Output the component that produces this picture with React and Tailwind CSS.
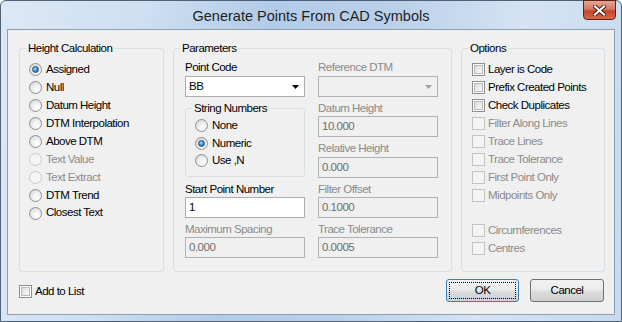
import React from "react";

function Group({ title, className, children }) {
  return (
    <fieldset className={`min-w-0 rounded-[3px] border border-[#d5dfe5] ${className}`}>
      <legend className="ml-[6px] px-[2px] leading-[13px]">{title}</legend>
      {children}
    </fieldset>
  );
}

function Radio({ label, checked, disabled, h = "h-[17.9px]" }) {
  return (
    <div className={`flex items-center gap-[4px] whitespace-nowrap ${h}`}>
      <span
        className={`flex h-[13px] w-[13px] shrink-0 items-center justify-center rounded-full border ${
          disabled
            ? "border-[#c9c9c9] bg-[#f5f5f5]"
            : "border-[#8e8f8f] bg-[radial-gradient(circle_at_65%_70%,#ffffff_0%,#eeeeee_45%,#cdcdcd_100%)]"
        }`}
      >
        {checked && (
          <span className="h-[7px] w-[7px] rounded-full border border-[#1d4f7c] bg-[radial-gradient(circle_at_40%_35%,#a6e4ff_0%,#3594d6_50%,#1a5588_100%)]" />
        )}
      </span>
      <span className={disabled ? "text-[#8b8b8b]" : "text-black"}>{label}</span>
    </div>
  );
}

function Check({ label, disabled, h = "h-[17.9px]" }) {
  return (
    <div className={`flex items-center gap-[3px] whitespace-nowrap ${h}`}>
      <span
        className={`h-[13px] w-[13px] shrink-0 border p-[1px] ${
          disabled ? "border-[#c4c4c4] bg-[#f4f4f4]" : "border-[#8e8f8f] bg-white"
        }`}
      >
        {!disabled && (
          <span className="block h-full w-full border border-[#b5b9bd] bg-[linear-gradient(135deg,#d8dadd_0%,#eceded_55%,#fbfbfb_100%)]" />
        )}
      </span>
      <span className={disabled ? "text-[#8b8b8b]" : "text-black"}>{label}</span>
    </div>
  );
}

function Label({ children, disabled, className = "" }) {
  return (
    <div className={`h-[13px] whitespace-nowrap leading-[13px] ${disabled ? "text-[#8b8b8b]" : "text-black"} ${className}`}>
      {children}
    </div>
  );
}

function Field({ value, disabled, className = "" }) {
  return (
    <div
      className={`flex h-[21px] items-center border pl-[3px] ${
        disabled ? "border-[#adb2b5] bg-[#f0f0f0] text-[#6d6d6d]" : "border-[#abadb3] bg-white text-black"
      } ${className}`}
    >
      {value}
    </div>
  );
}

function Combo({ value, disabled, className = "" }) {
  return (
    <div
      className={`flex h-[21px] items-center justify-between border pl-[3px] pr-[5px] ${
        disabled ? "border-[#adb2b5] bg-[#f0f0f0]" : "border-[#abadb3] bg-white"
      } ${className}`}
    >
      <span>{value}</span>
      <svg width="7" height="4" viewBox="0 0 7 4">
        <path d="M0 0h7L3.5 4z" fill={disabled ? "#a3a3a3" : "#000"} />
      </svg>
    </div>
  );
}

function Button({ children, primary }) {
  return (
    <button
      className={`h-[23px] rounded-[3px] border p-[2px] ${
        primary ? "w-[73px] border-[#3c7fb1]" : "w-[74px] border-[#707070]"
      } bg-[linear-gradient(#f2f2f2_0%,#ebebeb_48%,#dddddd_52%,#cfcfcf_100%)]`}
    >
      <span
        className={`flex h-full items-center justify-center border ${
          primary ? "border-dotted border-black" : "border-transparent"
        }`}
      >
        {children}
      </span>
    </button>
  );
}

export default function App() {
  return (
    <div className="flex h-[322px] w-[622px] flex-col rounded-t-[6px] border border-[#4f6176] bg-[linear-gradient(100deg,#dce8f5_0%,#cddff1_22%,#b2cbe8_40%,#b9d0ea_58%,#d5e3f3_78%,#c6d9ee_100%)] px-[6px] pb-[6px] font-['Liberation_Sans',Arial,sans-serif] text-[11.5px] tracking-[-0.5px] text-black">
      {/* Title bar */}
      <div className="-mx-[6px] grid h-[28px] grid-cols-[1fr_auto_1fr]">
        <div />
        <div className="pt-[5px] text-[14.5px] leading-[20px] tracking-normal text-[#1e1e1e]">
          Generate Points From CAD Symbols
        </div>
        <div className="flex justify-end">
          <div className="-mt-[1px] mr-[5px] flex h-[20px] w-[33px] items-center justify-center rounded-b-[4px] border border-[#5e2418] bg-[linear-gradient(#e8a493_0%,#d47a62_45%,#c4472b_55%,#d3684a_100%)]">
            <svg width="13" height="11" viewBox="0 0 13 11">
              <path d="M2 1.5l9 8M11 1.5l-9 8" stroke="#3b1a14" strokeWidth="4" strokeLinecap="square" />
              <path d="M2 1.5l9 8M11 1.5l-9 8" stroke="#ffffff" strokeWidth="2.2" strokeLinecap="square" />
            </svg>
          </div>
        </div>
      </div>

      {/* Client area */}
      <div className="flex flex-1 flex-col border border-[#8d9db2] bg-[#f0f0f0] pl-[11px] pr-[9px] pt-[12px]">
        <div className="flex gap-[9px]">
          <Group title="Height Calculation" className="h-[230px] w-[145px]">
            <div className="pl-[9px] pt-[6px]">
              <Radio label="Assigned" checked />
              <Radio label="Null" />
              <Radio label="Datum Height" />
              <Radio label="DTM Interpolation" />
              <Radio label="Above DTM" />
              <Radio label="Text Value" disabled />
              <Radio label="Text Extract" disabled />
              <Radio label="DTM Trend" />
              <Radio label="Closest Text" />
            </div>
          </Group>

          <Group title="Parameters" className="h-[230px] w-[279px]">
            <div className="flex gap-[13px] pl-[11px] pt-[6px]">
              <div className="flex w-[120px] flex-col">
                <Label>Point Code</Label>
                <Combo value="BB" className="mt-[2px]" />
                <Group title="String Numbers" className="mt-[5px] h-[75px] w-[120px]">
                  <div className="pl-[9px] pt-[2px]">
                    <Radio label="None" h="h-[17.5px]" />
                    <Radio label="Numeric" checked h="h-[17.5px]" />
                    <Radio label="Use ,N" h="h-[17.5px]" />
                  </div>
                </Group>
                <Label className="mt-[6px]">Start Point Number</Label>
                <Field value="1" className="mt-[1px]" />
                <Label disabled className="mt-[5px]">Maximum Spacing</Label>
                <Field value="0.000" disabled className="mt-[1px]" />
              </div>
              <div className="flex w-[120px] flex-col">
                <Label disabled>Reference DTM</Label>
                <Combo disabled className="mt-[2px]" />
                <Label disabled className="mt-[5px]">Datum Height</Label>
                <Field value="10.000" disabled className="mt-[1px]" />
                <Label disabled className="mt-[5px]">Relative Height</Label>
                <Field value="0.000" disabled className="mt-[2px]" />
                <Label disabled className="mt-[5px]">Filter Offset</Label>
                <Field value="0.1000" disabled className="mt-[1px]" />
                <Label disabled className="mt-[5px]">Trace Tolerance</Label>
                <Field value="0.0005" disabled className="mt-[1px]" />
              </div>
            </div>
          </Group>

          <Group title="Options" className="h-[230px] w-[144px]">
            <div className="pl-[10px] pt-[6px]">
              <Check label="Layer is Code" />
              <Check label="Prefix Created Points" />
              <Check label="Check Duplicates" />
              <Check label="Filter Along Lines" disabled />
              <Check label="Trace Lines" disabled />
              <Check label="Trace Tolerance" disabled />
              <Check label="First Point Only" disabled />
              <Check label="Midpoints Only" disabled />
              <div className="h-[17.9px]" />
              <Check label="Circumferences" disabled />
              <Check label="Centres" disabled />
            </div>
          </Group>
        </div>

        <div className="mt-[7px] flex items-center justify-between">
          <div className="mt-[3px]">
            <Check label="Add to List" />
          </div>
          <div className="flex gap-[11px] pr-[1px]">
            <Button primary>OK</Button>
            <Button>Cancel</Button>
          </div>
        </div>
      </div>
    </div>
  );
}
